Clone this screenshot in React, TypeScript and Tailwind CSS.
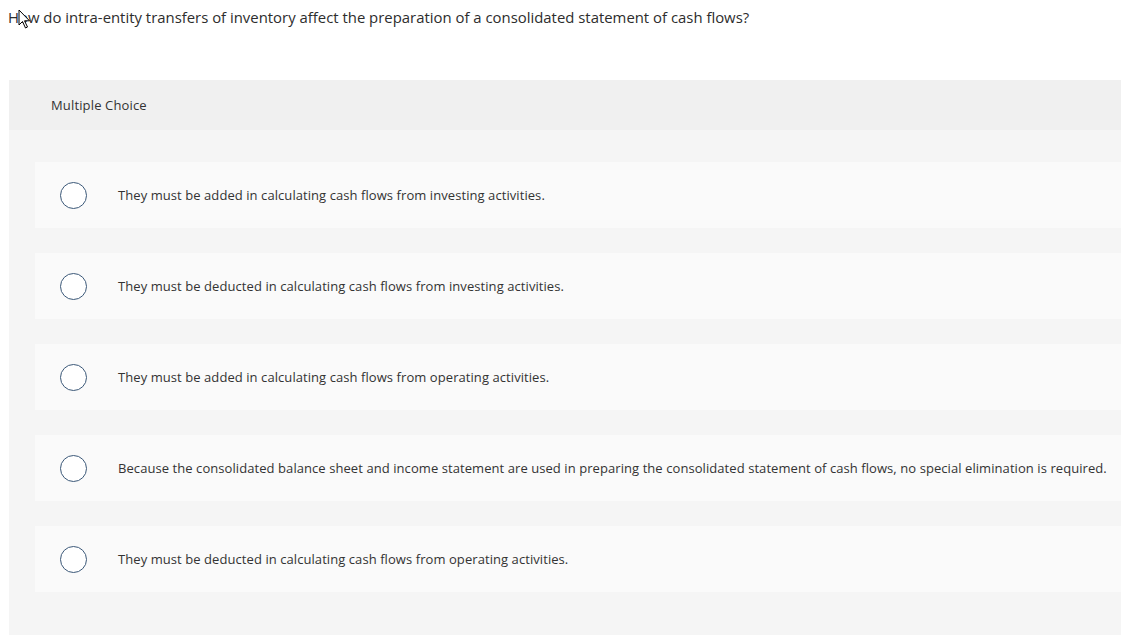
import React from "react";

const options = [
  "They must be added in calculating cash flows from investing activities.",
  "They must be deducted in calculating cash flows from investing activities.",
  "They must be added in calculating cash flows from operating activities.",
  "Because the consolidated balance sheet and income statement are used in preparing the consolidated statement of cash flows, no special elimination is required.",
  "They must be deducted in calculating cash flows from operating activities.",
];

export default function App() {
  return (
    <div
      className="w-[1121px] h-[635px] overflow-hidden bg-white text-[#333]"
      style={{ fontFamily: '"Open Sans", sans-serif' }}
    >
      <div className="relative pl-[8px] pt-[7px] h-[80px] text-[14.9px] leading-[20px] text-[#2d2d2d]">
        How do intra-entity transfers of inventory affect the preparation of a consolidated statement of cash flows?
        <svg
          className="absolute left-[18px] top-[9px]"
          width="14"
          height="20"
          viewBox="0 0 14 20"
        >
          <path
            d="M1 1 L1 16 L4.5 12.5 L7.5 19 L9.5 18 L6.5 11.8 L11.5 11.8 Z"
            fill="#fff"
            stroke="#000"
            strokeWidth="1"
            strokeLinejoin="miter"
          />
        </svg>
      </div>
      <div className="ml-[9px] h-[555px] bg-[#f5f5f5]">
        <div className="h-[50px] bg-[#f0f0f0] pl-[42px] pt-[2px] flex items-center text-[13px] tracking-[0.15px] text-[#333]">
          Multiple Choice
        </div>
        <div className="pt-[32px] pl-[26px] flex flex-col gap-[25px]">
          {options.map((o, i) => (
            <div
              key={i}
              className="h-[66px] bg-[#fafafa] flex items-center"
            >
              <div className="ml-[25px] w-[27px] h-[27px] rounded-full border-[1.5px] border-[#3b5878] bg-white shrink-0" />
              <div className="ml-[31px] pt-[2px] text-[13px] tracking-[0.07px] text-[#333] whitespace-nowrap">{o}</div>
            </div>
          ))}
        </div>
      </div>
    </div>
  );
}
